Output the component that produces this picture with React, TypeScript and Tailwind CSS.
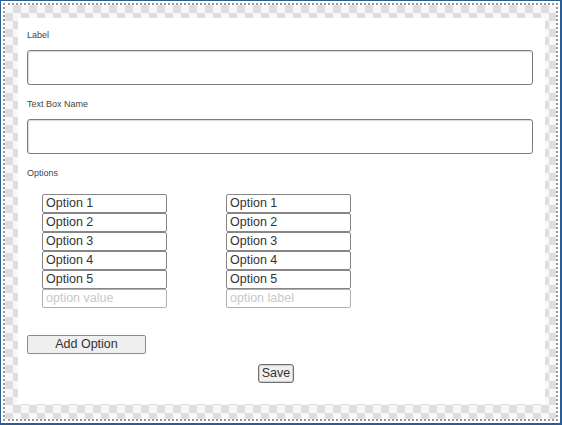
const values = ["Option 1", "Option 2", "Option 3", "Option 4", "Option 5"];

function OptionColumn({ items, placeholder }: { items: string[]; placeholder: string }) {
  return (
    <div className="flex w-[125px] flex-col">
      {items.map((v) => (
        <div
          key={v}
          className="flex h-[19px] items-center rounded-[2px] border border-[#868686] bg-white pl-[3px] text-[12.5px] leading-none text-[#333]"
        >
          {v}
        </div>
      ))}
      <div className="flex h-[19px] items-center rounded-[2px] border border-[#b0b0b0] bg-white pl-[3px] text-[12.5px] leading-none text-[#c9c9c9]">
        {placeholder}
      </div>
    </div>
  );
}

function Field({ label }: { label: string }) {
  return (
    <div className="flex flex-col">
      <span className="text-[9px] leading-[11px] text-[#444]">{label}</span>
      <div className="mt-[9px] h-[35px] rounded-[3px] border border-[#7c7c7c] bg-white shadow-[inset_1px_1px_1px_rgba(0,0,0,0.15)]" />
    </div>
  );
}

export default function App() {
  return (
    <div
      className="h-[425px] w-[562px] border-t border-l border-r-2 border-b-2 border-[#2b5c96] bg-white p-[2px]"
      style={{ fontFamily: '"Liberation Sans", Arial, sans-serif' }}
    >
      <div className="h-full border-2 border-dotted border-[#999]">
        <div className="h-full bg-[conic-gradient(#dedede_25%,#f8f8f8_0_50%,#dedede_0_75%,#f8f8f8_0)] bg-[length:16px_16px] pt-[13px] pl-[13px] pr-[11px] pb-[15px]">
          <div className="flex h-full flex-col bg-white pt-[12px] pl-[9px] pr-[12px]">
            <Field label="Label" />
            <div className="mt-[14px]">
              <Field label="Text Box Name" />
            </div>
            <span className="mt-[14px] text-[9px] leading-[11px] text-[#444]">Options</span>
            <div className="mt-[15px] flex gap-[59px] pl-[15px]">
              <OptionColumn items={values} placeholder="option value" />
              <OptionColumn items={values} placeholder="option label" />
            </div>
            <button className="mt-[27px] flex h-[19px] w-[119px] items-center justify-center rounded-[2px] border border-[#8c8c8c] bg-[#efefef] text-[12.5px] leading-none text-[#333]">
              Add Option
            </button>
            <button className="mt-[10px] ml-[231px] flex h-[19px] w-[36px] items-center justify-center rounded-[3px] border border-[#6f6f6f] bg-[#f0f0f0] text-[12.5px] leading-none text-[#333] shadow-[inset_0_0_0_1px_#d0d0d0]">
              Save
            </button>
          </div>
        </div>
      </div>
    </div>
  );
}
